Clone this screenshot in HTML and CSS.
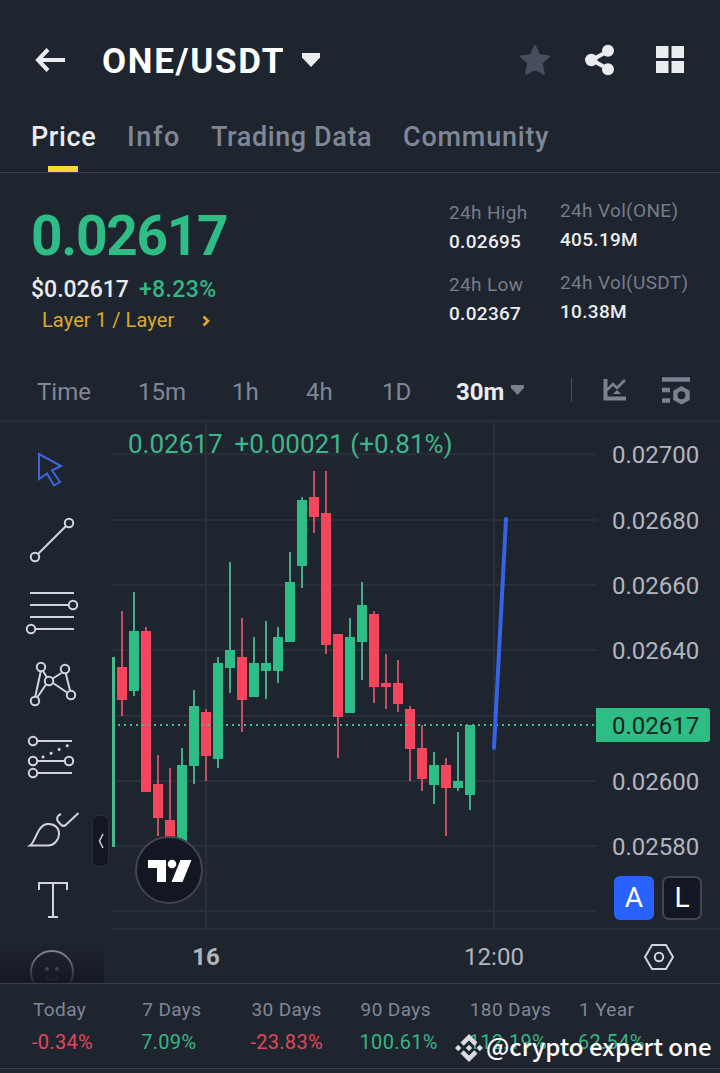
FILE: index.html
```html
<!DOCTYPE html>
<html lang="en">
<head>
    <meta charset="UTF-8">
    <meta name="viewport" content="width=device-width, initial-scale=1.0">
    <title>ONE/USDT</title>
    <link rel="stylesheet" href="styles.css">
</head>
<body>
    <header class="header">
        <svg class="back" width="32" height="26" viewBox="0 0 32 26"><path d="M14 2.500L4 13l10 10.500M3.500 13H31" fill="none" stroke="#eaecef" stroke-width="4"/></svg>
        <h1 class="pair">ONE/USDT</h1>
        <svg class="pair-caret" width="18" height="14" viewBox="0 0 18 14"><path d="M0 0h18v4.500L9 14 0 4.500z" fill="#eaecef"/></svg>
        <svg class="star" width="30" height="30" viewBox="0 0 30 30"><path d="M15 1l4.200 9.200 9.800 1-7.300 6.800 2.200 10.800L15 23.800l-8.900 5 2.200-10.800L1 11.200l9.800-1z" fill="#474f5c" stroke="#474f5c" stroke-width="2" stroke-linejoin="round"/></svg>
        <svg class="share" width="30" height="32" viewBox="0 0 30 32"><path d="M23 7L7 16l16 9" fill="none" stroke="#eaecef" stroke-width="4"/><circle cx="6.300" cy="16" r="6.200" fill="#eaecef"/><circle cx="23" cy="6.800" r="6" fill="#eaecef"/><circle cx="23" cy="25.200" r="6" fill="#eaecef"/></svg>
        <svg class="apps" width="28" height="28" viewBox="0 0 28 28"><path d="M0 0h12.500v12H0zM15.500 0H28v12H15.500zM0 15h12.500v12H0zM15.500 15H28v12H15.500z" fill="#eaecef"/></svg>
    </header>

    <nav class="tabs">
        <a class="tab active">Price</a>
        <a class="tab info">Info</a>
        <a class="tab trading">Trading Data</a>
        <a class="tab community">Community</a>
    </nav>

    <section class="summary">
        <div class="quote">
            <div class="last-price">0.02617</div>
            <div class="fiat"><span class="usd">$0.02617</span><span class="change">+8.23%</span></div>
            <div class="tag"><span>Layer 1 / Layer</span><svg width="8" height="12" viewBox="0 0 8 12"><path d="M1.500 1.500L6 6l-4.500 4.500" fill="none" stroke="#e0a82a" stroke-width="2.600"/></svg></div>
        </div>
        <dl class="stats left">
            <dt>24h High</dt>
            <dd>0.02695</dd>
            <dt>24h Low</dt>
            <dd>0.02367</dd>
        </dl>
        <dl class="stats right">
            <dt>24h Vol(ONE)</dt>
            <dd>405.19M</dd>
            <dt>24h Vol(USDT)</dt>
            <dd>10.38M</dd>
        </dl>
    </section>

    <div class="intervals">
        <span class="iv time">Time</span>
        <span class="iv m15">15m</span>
        <span class="iv h1">1h</span>
        <span class="iv h4">4h</span>
        <span class="iv d1">1D</span>
        <span class="iv current">30m</span>
        <svg class="iv-caret" width="13" height="10" viewBox="0 0 13 10"><path d="M0 0h13v3L6.500 10 0 3z" fill="#76808f"/></svg>
        <span class="divider"></span>
        <svg class="indicator" width="24" height="24" viewBox="0 0 24 24"><path d="M2.500 1v19.500H23" fill="none" stroke="#7b8392" stroke-width="4"/><path d="M4 12l6-6 4 4 8-8" fill="none" stroke="#7b8392" stroke-width="2.600"/><path d="M10 16l4-4 4 4z" fill="#7b8392"/></svg>
        <svg class="settings" width="28" height="28" viewBox="0 0 28 28"><path d="M0 2.500h28M0 13h8M0 23.500h8" stroke="#7b8392" stroke-width="4.500"/><path d="M19.500 9l8.200 4.700v9.200l-8.200 4.700-8.200-4.700v-9.200zM19.500 14.300a4 4 0 1 0 0 8 4 4 0 1 0 0-8z" fill="#7b8392" fill-rule="evenodd"/></svg>
    </div>

    <main class="chart">
        <div class="toolbar">
            <svg width="104" height="560" viewBox="0 423 104 560" fill="none" stroke="#d1d4dc" stroke-width="2">
                <defs>
                    <linearGradient id="fade" x1="0" y1="0" x2="0" y2="1">
                        <stop offset="0" stop-color="#131722" stop-opacity="0"/>
                        <stop offset="1" stop-color="#131722" stop-opacity=".9"/>
                    </linearGradient>
                </defs>
                <!-- cursor -->
                <path d="M39 454v25l8-5.500 7 12 6-3.500-8-11.500 9-4.500z" stroke="#3c66e0"/>
                <!-- trend line -->
                <path d="M38.200 553.800l27.600-27.600"/>
                <circle cx="35" cy="557" r="4.200"/><circle cx="69" cy="523" r="4.200"/>
                <!-- fib retracement -->
                <path d="M30 593h44M30 605h38.500M30 617h44M35.500 629H74"/>
                <circle cx="73" cy="605" r="4.200"/><circle cx="31" cy="629" r="4.200"/>
                <!-- pattern -->
                <path d="M40.700 671.500L35.300 696.500M43 671l4 6.500M52.800 678.500l8.700-5.500M65.800 673.500l4.200 17M53 683l14 9.500M46 684.500l-8.500 12.500"/>
                <circle cx="41" cy="667" r="4.200"/><circle cx="65" cy="669" r="4.200"/><circle cx="49" cy="681" r="4.200"/><circle cx="71" cy="695" r="4.200"/><circle cx="35" cy="701" r="4.200"/>
                <!-- forecast -->
                <path d="M38 741h34M38 761h26M38 773h34"/>
                <path d="M43 757l28-13" stroke-width="3" stroke-dasharray="0.100 8.800" stroke-linecap="round"/>
                <circle cx="33" cy="741" r="4.200"/><circle cx="33" cy="761" r="4.200"/><circle cx="33" cy="773" r="4.200"/><circle cx="69" cy="761" r="4.200"/>
                <!-- brush -->
                <path d="M30 845.500c6-4 7-20 17-21.500 8-1 12.500 5 12 10.500-.5 6-5 11-11 11z"/>
                <path d="M61 814c-4.500 2-4.500 5-3 7.500l3 3.200c1.500 1.500 3.500 1.500 5 0L78.500 813"/>
                <!-- text -->
                <path d="M39 890v-7h28v7M53 883v34M48 917h10"/>
                <!-- emoji -->
                <circle cx="52" cy="972" r="21" stroke="#a3a6af"/>
                <circle cx="47" cy="969" r="2" fill="#868993" stroke="none"/><circle cx="57" cy="969" r="2" fill="#868993" stroke="none"/>
                <path d="M46 977c2 4 10 4 12 0" stroke="#5d606b"/>
                <path d="M0 940h104v43H0z" fill="url(#fade)" stroke="none"/>
            </svg>
            <div class="collapse"><svg width="6" height="16" viewBox="0 0 6 16"><path d="M5 1L1.500 8 5 15" fill="none" stroke="#c4c7cf" stroke-width="1.600"/></svg></div>
        </div>

        <svg class="plot" width="616" height="562" viewBox="104 421 616 562">
            <g stroke="#2a303a" stroke-width="2">
                <path d="M112 454.300H596M112 520H596M112 585H596M112 650H596M112 716H596M112 781H596M112 846H596M112 911H596"/>
                <path d="M206 421V929M494 421V929"/>
                <path d="M112 929H720"/>
            </g>

            <!-- candles: wicks first, then bodies -->
            <path stroke="#45ab84" stroke-width="2" d="M134 592V696M182 748V840M194 690V784M218 657V768M230 562V693M254 637V697M266 621V699M278 627V683M290 552V642M302 497V588M350 618V713M362 582V680M434 752V804M458 732V791M470 725V810"/>
            <path stroke="#c74f63" stroke-width="2" d="M122 611V716M146 627V792M158 755V836M170 768V840M206 709V781M242 618V732M314 471V533M326 471V654M338 634V758M374 611V703M386 654V709M398 660V712M410 706V781M422 725V791M446 758V836"/>
            <path stroke="#2ebd85" stroke-width="10" d="M134 631V691M182 765V842M194 706V766M218 663V759M230 650V668M254 663V697M266 663V671M278 637V671M290 582V642M302 500V566M350 637V713M362 605V642M434 765V785M458 781V788M470 725V795"/>
            <path stroke="#f6465d" stroke-width="10" d="M122 667V700M146 631V792M158 784V818M170 820V842M206 712V756M242 657V700M314 497V517M326 513V645M338 634V717M374 614V687M386 683V687M398 683V704M410 709V749M422 748V779M446 765V788"/>
            <path stroke="#45b98a" stroke-width="3" d="M113.500 657V847"/>

            <path d="M118 725H596" stroke="#45b98a" stroke-width="2" stroke-dasharray="2 4"/>
            <path d="M494 748L506 519" stroke="#3562e6" stroke-width="4" stroke-linecap="round"/>

            <g class="legend">
                <text x="128" y="453">0.02617</text>
                <text x="234.500" y="453">+0.00021 (+0.81%)</text>
            </g>

            <g class="axis">
                <text x="612" y="463">0.02700</text>
                <text x="612" y="529">0.02680</text>
                <text x="612" y="594">0.02660</text>
                <text x="612" y="659">0.02640</text>
                <text x="612" y="790">0.02600</text>
                <text x="612" y="855">0.02580</text>
                <text x="206" y="965" text-anchor="middle" class="day">16</text>
                <text x="494" y="965" text-anchor="middle">12:00</text>
            </g>
            <path d="M596 708h111q3 0 3 3v28q0 3-3 3H596z" fill="#2ebd85"/>
            <text x="612" y="734" class="price-tag">0.02617</text>

            <!-- scale buttons -->
            <rect x="614" y="876" width="40" height="44" rx="6" fill="#2962ff"/>
            <text x="634" y="907" text-anchor="middle" class="scale">A</text>
            <rect x="663" y="877" width="38" height="42" rx="6" fill="#131722" stroke="#434651" stroke-width="2"/>
            <text x="682" y="907" text-anchor="middle" class="scale">L</text>
            <path d="M652 945h14l7 12-7 12h-14l-7-12z" fill="none" stroke="#d1d4dc" stroke-width="2"/>
            <circle cx="659" cy="957" r="4.200" fill="none" stroke="#d1d4dc" stroke-width="2"/>

            <!-- tradingview mark -->
            <circle cx="169" cy="870" r="33" fill="#131722" stroke="#434651" stroke-width="2"/>
            <path d="M148 860h18v22h-9v-14h-9zM180.500 860h11l-9 22h-11z" fill="#fff"/>
            <circle cx="172" cy="864" r="4.300" fill="#fff"/>
        </svg>
    </main>

    <footer class="returns">
        <div class="ret"><span>Today</span><b class="down">-0.34%</b></div>
        <div class="ret"><span>7 Days</span><b class="up">7.09%</b></div>
        <div class="ret"><span>30 Days</span><b class="down">-23.83%</b></div>
        <div class="ret"><span>90 Days</span><b class="up">100.61%</b></div>
        <div class="ret"><span>180 Days</span><b class="up">112.19%</b></div>
        <div class="ret"><span>1 Year</span><b class="up">62.54%</b></div>
        <div class="author">
            <svg width="28" height="28" viewBox="0 0 28 28" fill="#d9dbde"><path d="M14 0l8.500 8.500-3.200 3.200L14 6.400l-5.300 5.300-3.200-3.200zM14 28l8.500-8.500-3.200-3.200-5.300 5.300-5.300-5.300-3.200 3.200zM14 10.800l3.200 3.200-3.200 3.200-3.200-3.200zM3.200 10.800L6.400 14l-3.200 3.200L0 14zM24.800 10.800L28 14l-3.200 3.200-3.200-3.200z"/></svg>
            <span>@crypto expert one</span>
        </div>
    </footer>
</body>
</html>
```
FILE: styles.css
```css
* {
    box-sizing: border-box;
}
body {
    margin: 0;
    width: 720px;
    height: 1073px;
    overflow: hidden;
    background-color: #1f252f;
    color: #eaecef;
    font-family: Roboto, "Liberation Sans", sans-serif;
}
svg {
    display: block;
    flex: none;
}
.header {
    display: flex;
    align-items: center;
    height: 102px;
    padding: 18px 36px 0 34px;
}
.pair {
    margin: 0 0 0 36px;
    padding-top: 3px;
    width: 200px;
    font-size: 35px;
    font-weight: 700;
    line-height: 40px;
    letter-spacing: 1.7px;
    white-space: nowrap;
    color: #fff;
}
.star {
    margin-left: 200px;
}
.share {
    margin-left: 35px;
}
.apps {
    margin-left: 41px;
}
.tabs {
    display: flex;
    height: 71px;
    padding-left: 31px;
    border-bottom: 1px solid #3a414b;
    font-size: 27px;
    font-weight: 500;
    line-height: 70px;
    letter-spacing: .6px;
    color: #7f8796;
    white-space: nowrap;
}
.tab {
    width: 96px;
    height: 70px;
}
.tab.active {
    color: #eaecef;
    background: linear-gradient(#fcd535, #fcd535) 17px 100% / 30px 6px no-repeat;
}
.tab.info {
    width: 84px;
    letter-spacing: 1.6px;
}
.tab.trading {
    width: 192px;
}
.tab.community {
    letter-spacing: .8px;
}
.summary {
    display: flex;
    height: 187px;
    padding-left: 31px;
    white-space: nowrap;
}
.quote {
    width: 418px;
    padding-top: 34px;
}
.last-price {
    height: 66px;
    font-size: 55px;
    font-weight: 700;
    line-height: 58px;
    letter-spacing: -1.3px;
    color: #2ebd85;
}
.fiat {
    display: flex;
    gap: 10px;
    font-size: 23px;
    font-weight: 500;
    line-height: 34px;
}
.change {
    letter-spacing: .4px;
    color: #36b583;
}
.tag {
    display: flex;
    align-items: center;
    gap: 28px;
    padding-left: 11px;
    font-size: 20px;
    line-height: 27px;
    letter-spacing: .1px;
    color: #d9aa2f;
}
.stats {
    margin: 0;
    font-size: 19px;
    line-height: 28px;
}
.stats.left {
    width: 111px;
    padding-top: 26px;
}
.stats.right {
    padding-top: 24px;
}
.stats dt {
    letter-spacing: .35px;
    color: #747c89;
}
.stats dd {
    margin: 1px 0 15px;
    font-weight: 500;
    letter-spacing: .3px;
}
.intervals {
    display: flex;
    align-items: center;
    height: 63px;
    padding-left: 37px;
    border-bottom: 3px solid #282e38;
    font-size: 24px;
    color: #7f8796;
    white-space: nowrap;
}
.iv {
    padding-top: 4px;
}
.time {
    width: 101px;
}
.m15 {
    width: 94px;
}
.h1 {
    width: 74px;
}
.h4 {
    width: 76px;
}
.d1 {
    width: 74px;
}
.current {
    width: 55px;
    color: #eaecef;
    font-weight: 700;
}
.divider {
    width: 1px;
    height: 24px;
    margin-left: 47px;
    background-color: #474f5c;
}
.indicator {
    margin-left: 31px;
}
.settings {
    margin-left: 35px;
    margin-top: 2px;
}
.chart {
    display: flex;
    height: 560px;
}
.toolbar {
    position: relative;
    width: 104px;
}
.collapse {
    position: absolute;
    left: 92px;
    top: 392px;
    display: flex;
    align-items: center;
    justify-content: center;
    width: 17px;
    height: 52px;
    border: 1px solid #2a2e39;
    border-radius: 7px;
    background-color: #131722;
}
.plot {
    margin-top: -2px;
}
.legend {
    fill: #3fb68a;
    font-size: 26px;
}
.axis {
    fill: #b2b5be;
    font-size: 24px;
}
.day {
    font-weight: 700;
}
.price-tag {
    fill: #10261f;
    font-size: 24px;
}
.scale {
    fill: #fff;
    font-size: 28px;
}
.returns {
    position: relative;
    display: flex;
    height: 86px;
    padding: 12px 0 0 33px;
    border-top: 1px solid #3a414b;
    border-bottom: 1px solid #3a414b;
    font-size: 19px;
    letter-spacing: .4px;
    white-space: nowrap;
}
.ret {
    display: flex;
    flex-direction: column;
    flex: none;
    width: 109.2px;
    line-height: 28px;
    color: #7f8796;
}
.ret b {
    margin-top: 4px;
    margin-left: -1px;
    font-size: 20px;
    font-weight: 400;
    letter-spacing: .3px;
}
.up {
    color: #36b583;
}
.down {
    color: #e0475b;
}
.author {
    position: absolute;
    left: 455px;
    top: 47px;
    display: flex;
    align-items: center;
    gap: 3px;
    font: 500 24px/36px "Noto Sans CJK SC", "Noto Sans", sans-serif;
    letter-spacing: 0;
    color: #fff;
}
.author span {
    margin-top: -3px;
}
```
